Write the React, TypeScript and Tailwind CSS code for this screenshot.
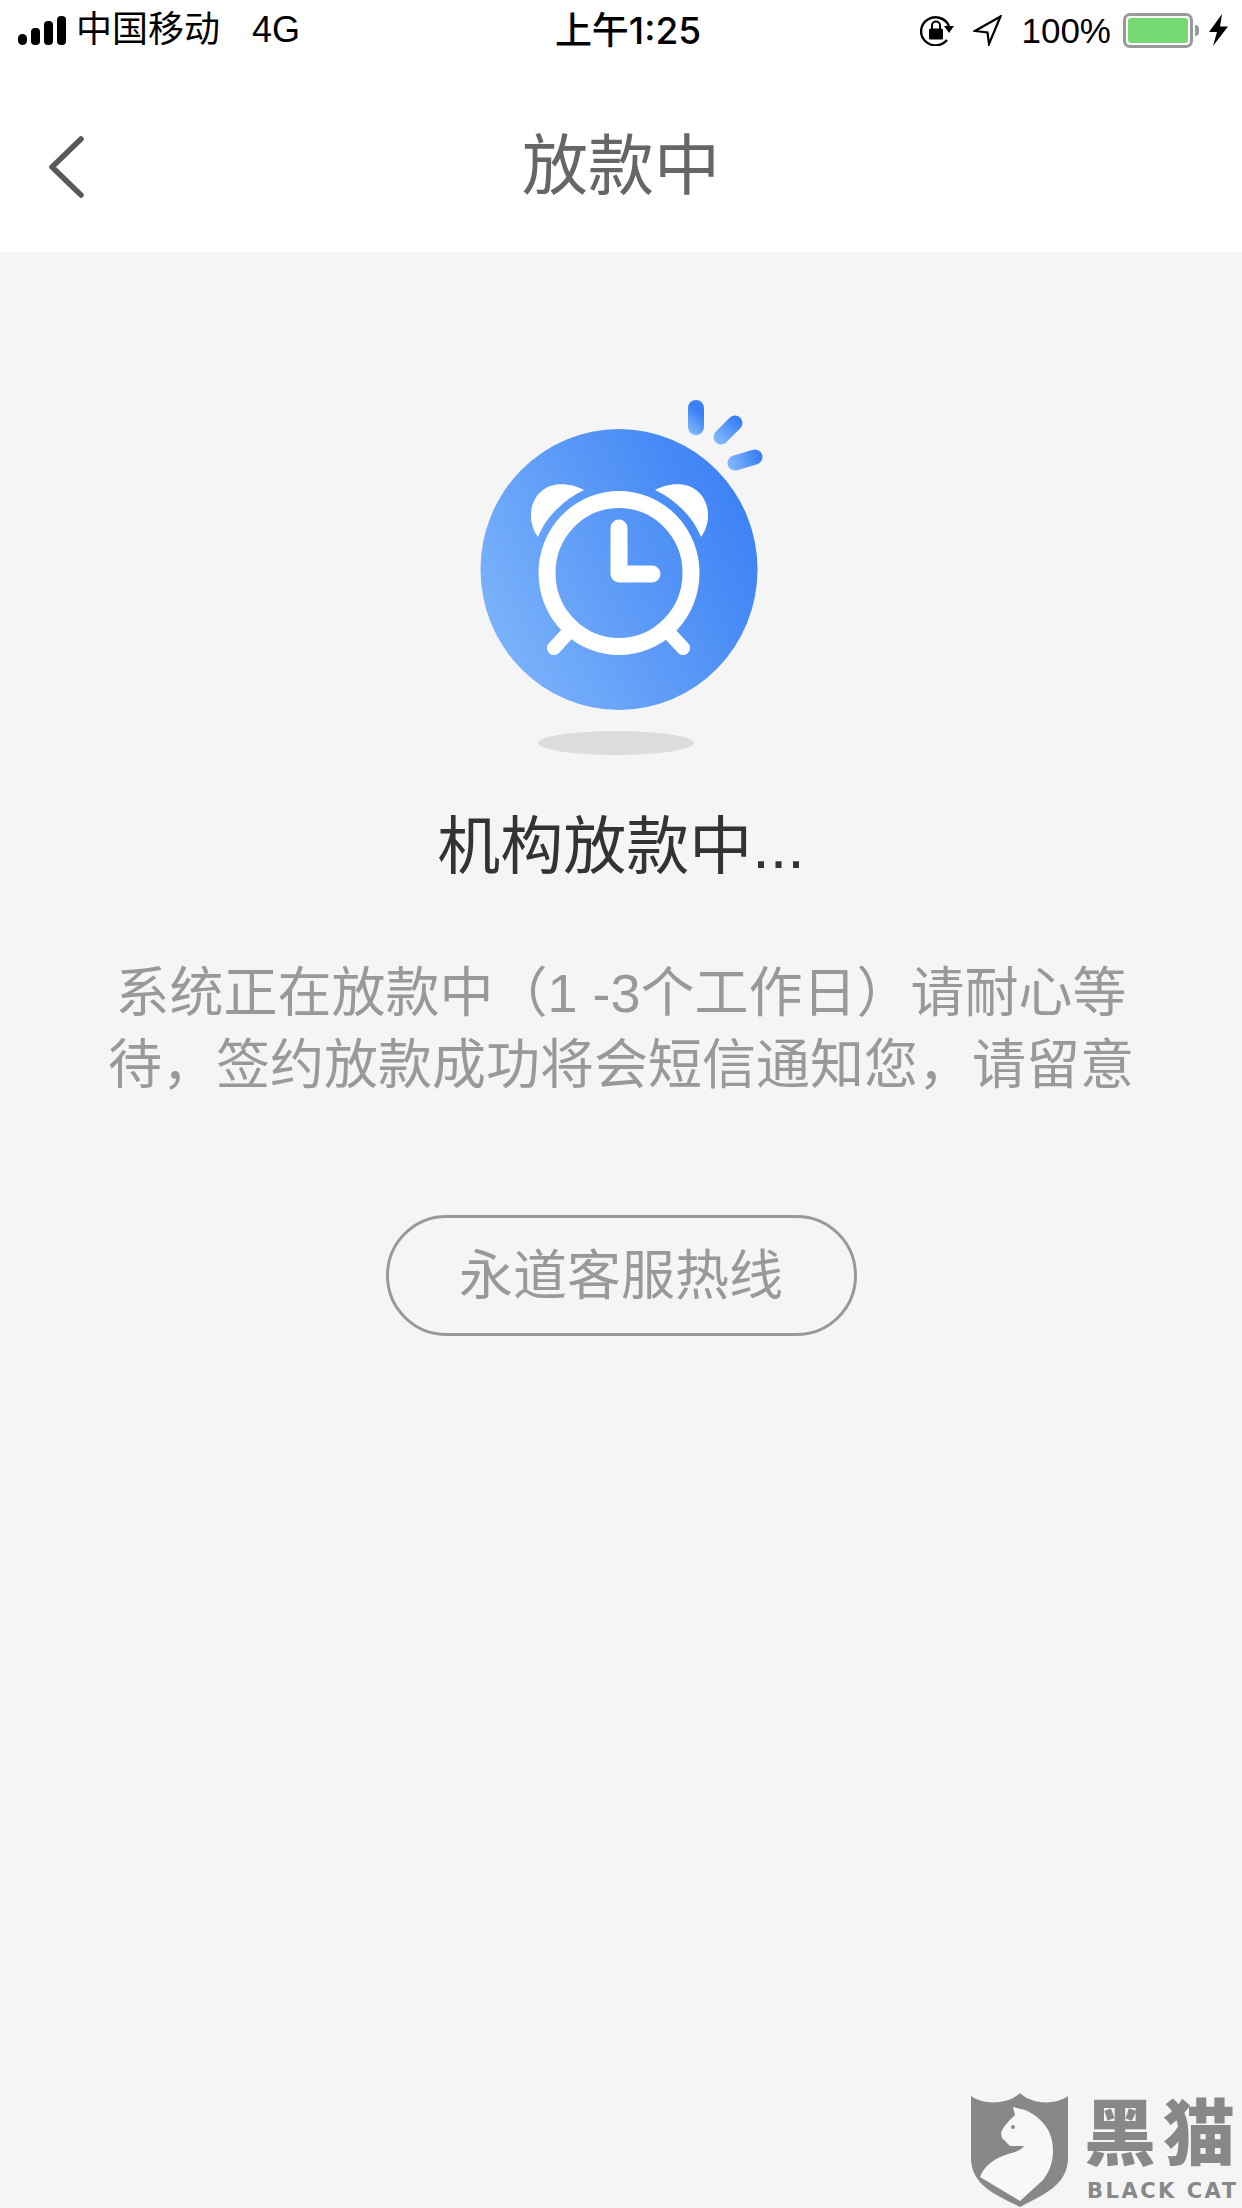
const FONT = "font-['Liberation_Sans','Noto_Sans_CJK_SC',sans-serif]";

function StatusBar() {
  return (
    <div className="flex h-[60px] items-center text-black">
      {/* Carrier */}
      <div className="flex flex-1 items-center pl-[18px]">
        <svg width="48" height="29" viewBox="0 0 48 29" fill="#000">
          <rect x="0" y="18" width="9" height="11" rx="4.5" />
          <rect x="13" y="12" width="9" height="17" rx="4" />
          <rect x="26" y="5" width="9" height="24" rx="4" />
          <rect x="39" y="0" width="9" height="29" rx="4" />
        </svg>
        <span className="ml-[10px] text-[36px] leading-none">中国移动</span>
        <span className="ml-[32px] text-[36px] leading-none">4G</span>
      </div>
      <span className="ml-[10px] font-['Inter','Noto_Sans_CJK_SC',sans-serif] text-[37px] font-medium leading-none">上午1:25</span>
      {/* Right side */}
      <div className="flex flex-1 items-center justify-end pr-[14px]">
        <svg width="34" height="31" viewBox="0 0 34 31" fill="none">
          <path d="M29 11 A14.5 14 0 1 0 27 25" stroke="#000" strokeWidth="2.4" />
          <path d="M24 11 H34 L29 18 Z" fill="#000" />
          <rect x="9" y="13.5" width="14" height="11" rx="1.5" fill="#000" />
          <path d="M12 14 V10.5 A4 4 0 0 1 20 10.5 V14" stroke="#000" strokeWidth="2" />
        </svg>
        <svg className="ml-[19px]" width="29" height="31" viewBox="0 0 29 31" fill="none">
          <path d="M27.5 1.5 L2 16 L14.5 17.5 L16 29 Z" stroke="#000" strokeWidth="2.2" />
        </svg>
        <span className="ml-[19px] text-[35px] leading-none">100%</span>
        <div className="ml-[12px] flex items-center">
          <div className="h-[35px] w-[70px] rounded-[7px] border-[3px] border-[#999] p-[2px]">
            <div className="h-full w-full rounded-[3px] bg-[#76d972]" />
          </div>
          <div className="ml-[2px] h-[11px] w-[4px] rounded-r-full bg-[#999]" />
        </div>
        <svg className="ml-[10px]" width="19" height="32" viewBox="0 0 19 32" fill="#000">
          <path d="M13 0 L0 18 H8 L4 32 L19 12.5 H11 Z" />
        </svg>
      </div>
    </div>
  );
}

function ClockIllustration() {
  return (
    <svg className="mx-auto block" width="340" height="390" viewBox="0 0 340 390" fill="none">
      <defs>
        <linearGradient id="disc" x1="30" y1="260" x2="306" y2="120" gradientUnits="userSpaceOnUse">
          <stop offset="0" stopColor="#7db4fa" />
          <stop offset="1" stopColor="#3a80f5" />
        </linearGradient>
        <linearGradient id="tick1" x1="236" y1="48" x2="254" y2="27" gradientUnits="userSpaceOnUse">
          <stop offset="0" stopColor="#7db4fa" />
          <stop offset="0.7" stopColor="#3a80f5" />
        </linearGradient>
        <linearGradient id="tick2" x1="268" y1="60" x2="286" y2="40" gradientUnits="userSpaceOnUse">
          <stop offset="0" stopColor="#7db4fa" />
          <stop offset="1" stopColor="#3a80f5" />
        </linearGradient>
        <linearGradient id="tick3" x1="280" y1="84" x2="308" y2="76" gradientUnits="userSpaceOnUse">
          <stop offset="0" stopColor="#7db4fa" />
          <stop offset="1" stopColor="#3a80f5" />
        </linearGradient>
      </defs>
      {/* Ticks */}
      <path d="M245 28 V47" stroke="url(#tick1)" strokeWidth="16" strokeLinecap="round" />
      <path d="M270 57 L284 43" stroke="url(#tick2)" strokeWidth="15" strokeLinecap="round" />
      <path d="M284 83 L304 77" stroke="url(#tick3)" strokeWidth="15" strokeLinecap="round" />
      {/* Disc */}
      <ellipse cx="168" cy="189.5" rx="138.5" ry="140.5" fill="url(#disc)" />
      {/* Clock */}
      <ellipse cx="168" cy="193" rx="72" ry="73.5" stroke="#fff" strokeWidth="17" />
      <path d="M168 148 V194 H201" stroke="#fff" strokeWidth="17" strokeLinecap="round" strokeLinejoin="round" />
      <path d="M115 255 L103 268" stroke="#fff" strokeWidth="14" strokeLinecap="round" />
      <path d="M220 255 L232 268" stroke="#fff" strokeWidth="14" strokeLinecap="round" />
      <path d="M133 110 C122 104 104 101 92 110 C78 120 76 142 87 157 C95 137 112 120 133 110Z" fill="#fff" />
      <path d="M204 110 C215 104 233 101 245 110 C259 120 261 142 250 157 C242 137 225 120 204 110Z" fill="#fff" />
      {/* Shadow */}
      <ellipse cx="165" cy="363" rx="78" ry="12" fill="#dcdcdc" />
    </svg>
  );
}

function Watermark() {
  return (
    <div className="absolute bottom-0 right-[2px] flex items-end">
      <svg width="100" height="116" viewBox="22 22 100 116" fill="none">
        <path d="M23 26 C35 35 60 35 72 23 C84 35 108 35 120 26 V88 C120 115 95 125 72 137 C48 125 23 115 23 88 Z" fill="#888" />
        <path
          d="M65 37 L77 40 C95 48 105 62 105 80 C105 95 100 103 95 110 L72 131 L32 107 C36 95 48 88 60 84 C68 82 73 80 76 76 L62 76 L54 68 L53 63 C56 55 62 50 67 45Z"
          fill="#f8f8f8"
        />
        <circle cx="65" cy="57" r="2" fill="#888" />
      </svg>
      <div className="ml-[17px] flex w-[153px] flex-col items-start text-[#888]">
        <span className="-ml-[3px] text-[72px] font-black leading-[70px] tracking-[7px] whitespace-nowrap">黑猫</span>
        <span className="mt-[14px] mb-[8px] font-['DejaVu_Sans',sans-serif] text-[21px] font-bold leading-[17px] tracking-[2.5px] whitespace-nowrap">BLACK CAT</span>
      </div>
    </div>
  );
}

export default function App() {
  return (
    <div className={`relative h-[2208px] w-[1242px] overflow-hidden bg-[#f5f5f5] ${FONT}`}>
      <div className="bg-white">
        <StatusBar />
        {/* Nav */}
        <div className="relative flex h-[192px] items-center justify-center pt-[20px]">
          <svg className="absolute left-[48px] top-[76px]" width="36" height="62" viewBox="0 0 36 62" fill="none">
            <path d="M33 3 L4 31 L33 59" stroke="#595959" strokeWidth="5.5" strokeLinecap="round" strokeLinejoin="round" />
          </svg>
          <h1 className="text-[66px] font-normal leading-none text-[#666]">放款中</h1>
        </div>
      </div>

      {/* Body */}
      <div className="flex flex-col items-center pt-[128px]">
        <ClockIllustration />
        <h2 className="mt-[34px] text-[63px] font-normal leading-[84px] text-[#333]">机构放款中...</h2>
        <p className="mt-[69px] text-center text-[54px] leading-[72px] text-[#999]">
          <span className="block whitespace-nowrap">系统正在放款中（1 -3个工作日）请耐心等</span>
          <span className="block whitespace-nowrap">待，签约放款成功将会短信通知您，请留意</span>
        </p>
        <button className="mt-[114px] h-[121px] w-[471px] rounded-full border-[3px] border-[#999] text-[54px] leading-none text-[#999]">
          永道客服热线
        </button>
      </div>

      <Watermark />
    </div>
  );
}
